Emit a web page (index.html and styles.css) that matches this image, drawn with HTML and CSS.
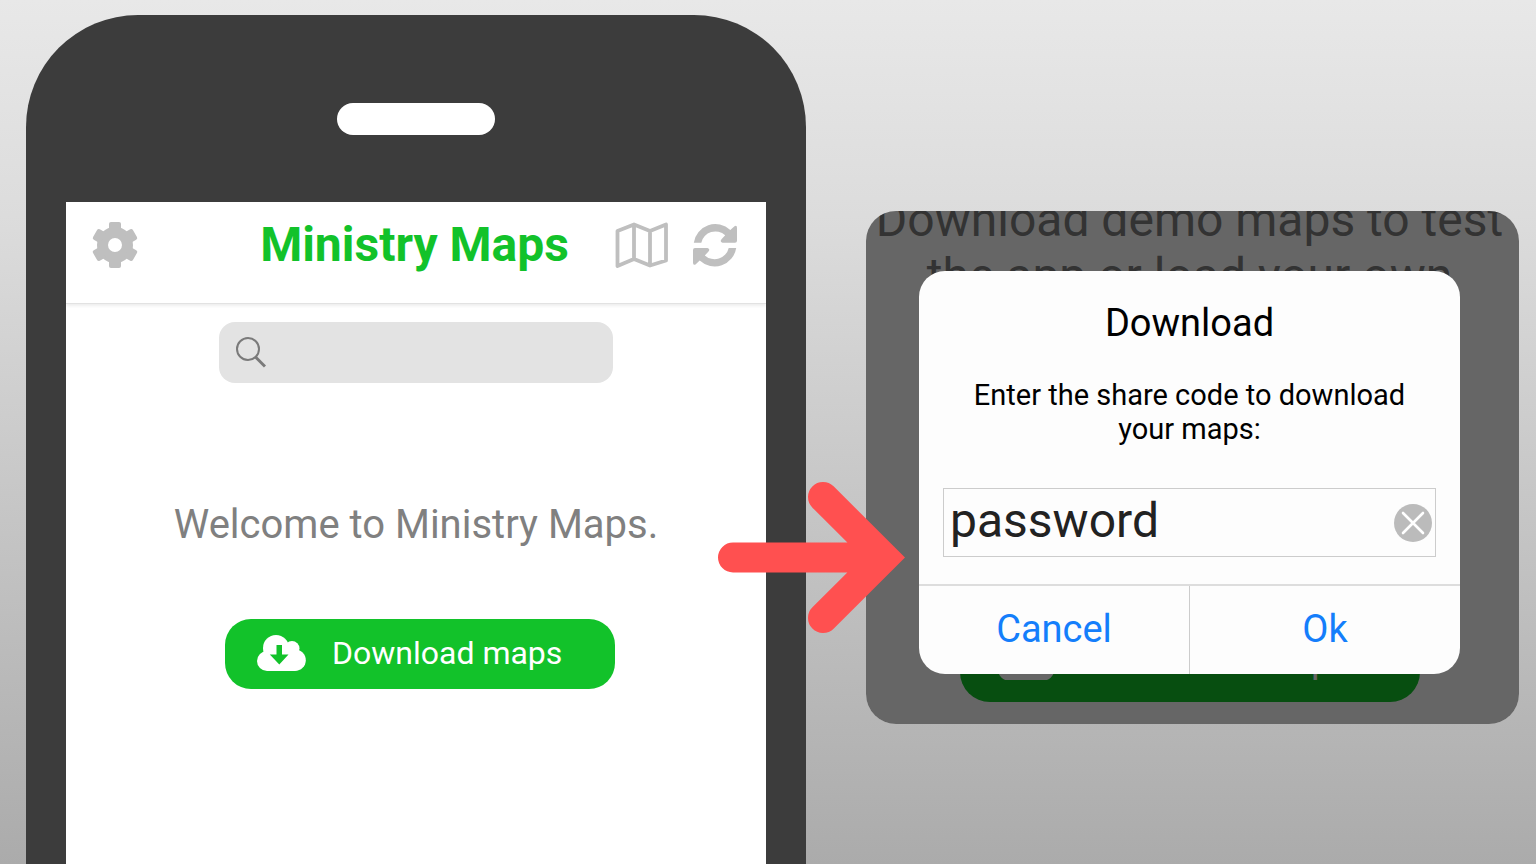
FILE: index.html
```html
<!DOCTYPE html>
<html lang="en">

<head>
    <meta charset="UTF-8">
    <meta name="viewport" content="width=device-width, initial-scale=1.0">
    <title>Ministry Maps</title>
    <link rel="stylesheet" href="styles.css">
</head>

<body>
    <div class="stage">
        <!-- Phone -->
        <div class="phone">
            <div class="speaker"></div>
            <div class="screen">
                <header class="header">
                    <button class="icon-button" aria-label="Settings">
                        <svg width="46" height="46" viewBox="0 0 46 46" fill="#bfbfbf">
                            <circle cx="23" cy="23" r="12.5" fill="none" stroke="#bfbfbf" stroke-width="11" />
                            <path id="tooth" d="M17 9V2Q17 0 19 0H27Q29 0 29 2V9Z" />
                            <use href="#tooth" transform="rotate(60 23 23)" />
                            <use href="#tooth" transform="rotate(120 23 23)" />
                            <use href="#tooth" transform="rotate(180 23 23)" />
                            <use href="#tooth" transform="rotate(240 23 23)" />
                            <use href="#tooth" transform="rotate(300 23 23)" />
                        </svg>
                    </button>
                    <h1 class="title">Ministry Maps</h1>
                    <div class="header-actions">
                        <button class="icon-button" aria-label="Map">
                            <svg width="53" height="46" viewBox="0 0 53 46" fill="none" stroke="#bfbfbf" stroke-width="3.8" stroke-linejoin="round">
                                <path d="M2.5 9L19 2.5 35 9 51 2.5V38.5L35 43.5 19 37 2.5 44ZM19 2.5V37M35 9V43.5" />
                            </svg>
                        </button>
                        <button class="icon-button" aria-label="Refresh">
                            <svg width="44" height="46" viewBox="0 0 44 46" fill="#bfbfbf">
                                <path id="turn" d="M.8 20.7A21.8 21.8 0 0 1 37.3 8L41.5 4.2Q44 2.8 44 6V18.7Q44 20.7 42 20.7H29.5Q26.5 19.7 28.5 17.2L32.2 13.2A14.5 14.5 0 0 0 8.3 20.7Z" />
                                <use href="#turn" transform="rotate(180 22 23.3)" />
                            </svg>
                        </button>
                    </div>
                </header>

                <label class="search">
                    <svg width="30" height="31" viewBox="0 0 30 31" fill="none" stroke="#7a7a7a">
                        <circle cx="12" cy="12" r="11" stroke-width="2" />
                        <path d="M19.5 20L29 29.5" stroke-width="3" />
                    </svg>
                    <input class="search-input" type="text" aria-label="Search">
                </label>

                <p class="welcome">Welcome to Ministry Maps.</p>

                <div class="actions">
                    <button class="download">
                        <svg class="cloud" viewBox="0 0 49 36">
                            <g fill="currentColor">
                                <circle cx="10" cy="26" r="10" />
                                <circle cx="19" cy="13" r="13" />
                                <circle cx="35" cy="13.5" r="7.5" />
                                <circle cx="38" cy="25.2" r="10.8" />
                                <path d="M10 14H38V36H10Z" />
                            </g>
                            <path d="M19.5 10H25V19.5H31.5L22.3 29.5 12.8 19.5H19.5Z" fill="#12c22a" />
                        </svg>
                        Download maps
                    </button>
                </div>
            </div>
        </div>

        <!-- Share code popup -->
        <div class="panel-wrap">
            <div class="panel">
                <div class="backdrop">
                    <p class="hint">Download demo maps to test the app or load your own</p>
                    <div class="download download-large">
                        <svg class="cloud" viewBox="0 0 49 36">
                            <g fill="currentColor">
                                <circle cx="10" cy="26" r="10" />
                                <circle cx="19" cy="13" r="13" />
                                <circle cx="38" cy="25.2" r="10.8" />
                                <path d="M10 14H38V36H10Z" />
                            </g>
                        </svg>
                        Download maps
                    </div>
                </div>
                <div class="overlay">
                    <form class="dialog">
                        <h2 class="dialog-title">Download</h2>
                        <label class="dialog-text" for="code">Enter the share code to download your maps:</label>
                        <div class="field">
                            <input id="code" class="field-input" type="text" value="password">
                            <button type="button" class="icon-button" aria-label="Clear">
                                <svg width="38" height="38" viewBox="0 0 38 38">
                                    <circle cx="19" cy="19" r="19" fill="#bbb" />
                                    <path d="M9 9L29 29M29 9L9 29" stroke="#fff" stroke-width="2.6" stroke-linecap="round" />
                                </svg>
                            </button>
                        </div>
                        <div class="dialog-buttons">
                            <button type="button">Cancel</button>
                            <button type="button">Ok</button>
                        </div>
                    </form>
                </div>
            </div>
            <svg class="arrow" width="187" height="151" viewBox="0 0 187 151" fill="none" stroke="#ff5050" stroke-width="30" stroke-linecap="round">
                <path d="M15 75.5H150M105 15L165.8 75.5 105 136" />
            </svg>
        </div>
    </div>
</body>

</html>
```
FILE: styles.css
```css
* {
    box-sizing: border-box;
}

body {
    margin: 0;
    font-family: Roboto, sans-serif;
}

h1,
h2,
p {
    margin: 0;
    font-weight: normal;
}

button {
    padding: 0;
    border: none;
    background: none;
    font-family: inherit;
    cursor: pointer;
}

input {
    width: 100%;
    min-width: 0;
    border: none;
    outline: none;
    background: none;
    font-family: inherit;
}

svg {
    display: block;
}

.stage {
    display: grid;
    grid-template-columns: minmax(0, 780fr) minmax(0, 653fr);
    align-items: start;
    gap: 60px;
    height: 100vh;
    padding: 15px 17px 0 26px;
    overflow: hidden;
    background: linear-gradient(#e8e8e8, #dcdcdc 25%, #ababab);
}

/* Phone */
.phone {
    display: flex;
    flex-direction: column;
    height: calc(100vh - 15px);
    padding: 88px 40px 0;
    border-radius: 112px 112px 0 0;
    background: #3c3c3c;
}

.speaker {
    width: 158px;
    height: 32px;
    margin: 0 auto 67px;
    border-radius: 16px;
    background: #fff;
}

.screen {
    flex: 1;
    display: flex;
    flex-direction: column;
    background: #fff;
    overflow: hidden;
}

.header {
    display: grid;
    grid-template-columns: 1fr auto 1fr;
    align-items: start;
    padding: 20px 29px 35px 26px;
    border-bottom: 1px solid #e2e2e2;
    box-shadow: 0 2px 3px #eee;
}

.icon-button {
    flex: none;
    justify-self: start;
}

.title {
    color: #12c22a;
    font-size: 48px;
    font-weight: bold;
    line-height: 46px;
}

.header-actions {
    display: flex;
    justify-content: flex-end;
    gap: 25px;
}

.search {
    display: flex;
    align-items: center;
    align-self: center;
    width: 394px;
    height: 61px;
    margin-top: 18px;
    padding: 0 17px;
    border-radius: 16px;
    background: #e3e3e3;
}

.search-input {
    flex: 1;
    margin-left: 12px;
    font-size: 28px;
}

.welcome {
    margin: 117px 0 69px;
    color: #808080;
    font-size: 40px;
    line-height: 50px;
    text-align: center;
}

.actions {
    display: flex;
    justify-content: center;
    padding-left: 8px;
}

.download {
    display: flex;
    align-items: center;
    gap: 26px;
    width: 390px;
    height: 70px;
    padding: 0 32px 2px;
    border-radius: 26px;
    background: #12c22a;
    color: #fff;
    font-size: 32px;
    white-space: nowrap;
}

.cloud {
    flex: none;
    width: 49px;
}

/* Share code popup */
.panel-wrap {
    position: relative;
    margin-top: 196px;
}

.panel {
    display: grid;
    border-radius: 30px;
    background: #fff;
    overflow: hidden;
}

.backdrop,
.overlay {
    grid-area: 1 / 1;
}

.backdrop {
    display: flex;
    flex-direction: column;
    align-items: center;
    justify-content: space-between;
    padding: 0 6px 22px 0;
}

.hint {
    margin-top: -19px;
    color: #808080;
    font-size: 48px;
    line-height: 56px;
    text-align: center;
}

.download-large {
    gap: 30px;
    width: 460px;
    height: 83px;
    padding: 0 38px 2px;
    border-radius: 30px;
    font-size: 37px;
}

.download-large .cloud {
    width: 57px;
}

.overlay {
    padding: 60px 59px 50px 53px;
    background: rgba(0, 0, 0, 0.6);
}

.dialog {
    display: flex;
    flex-direction: column;
    border-radius: 26px;
    background: #fdfdfd;
    overflow: hidden;
}

.dialog-title {
    margin-top: 30px;
    font-size: 38px;
    line-height: 44px;
    text-align: center;
}

.dialog-text {
    margin: 33px 50px 42px;
    font-size: 29px;
    line-height: 34px;
    text-align: center;
}

.field {
    display: flex;
    align-items: center;
    height: 69px;
    margin: 0 24px 27px;
    padding-right: 3px;
    border: 1px solid #ccc;
}

.field-input {
    flex: 1;
    padding: 0 6px 4px;
    color: #222;
    font-size: 48px;
}

.dialog-buttons {
    display: flex;
    border-top: 2px solid #ddd;
}

.dialog-buttons button {
    flex: 1;
    height: 88px;
    padding-bottom: 2px;
    color: #147efb;
    font-size: 38px;
}

.dialog-buttons button + button {
    border-left: 1px solid #ccc;
}

/* Points from the phone to the popup */
.arrow {
    position: absolute;
    top: 271px;
    left: -148px;
}
```
